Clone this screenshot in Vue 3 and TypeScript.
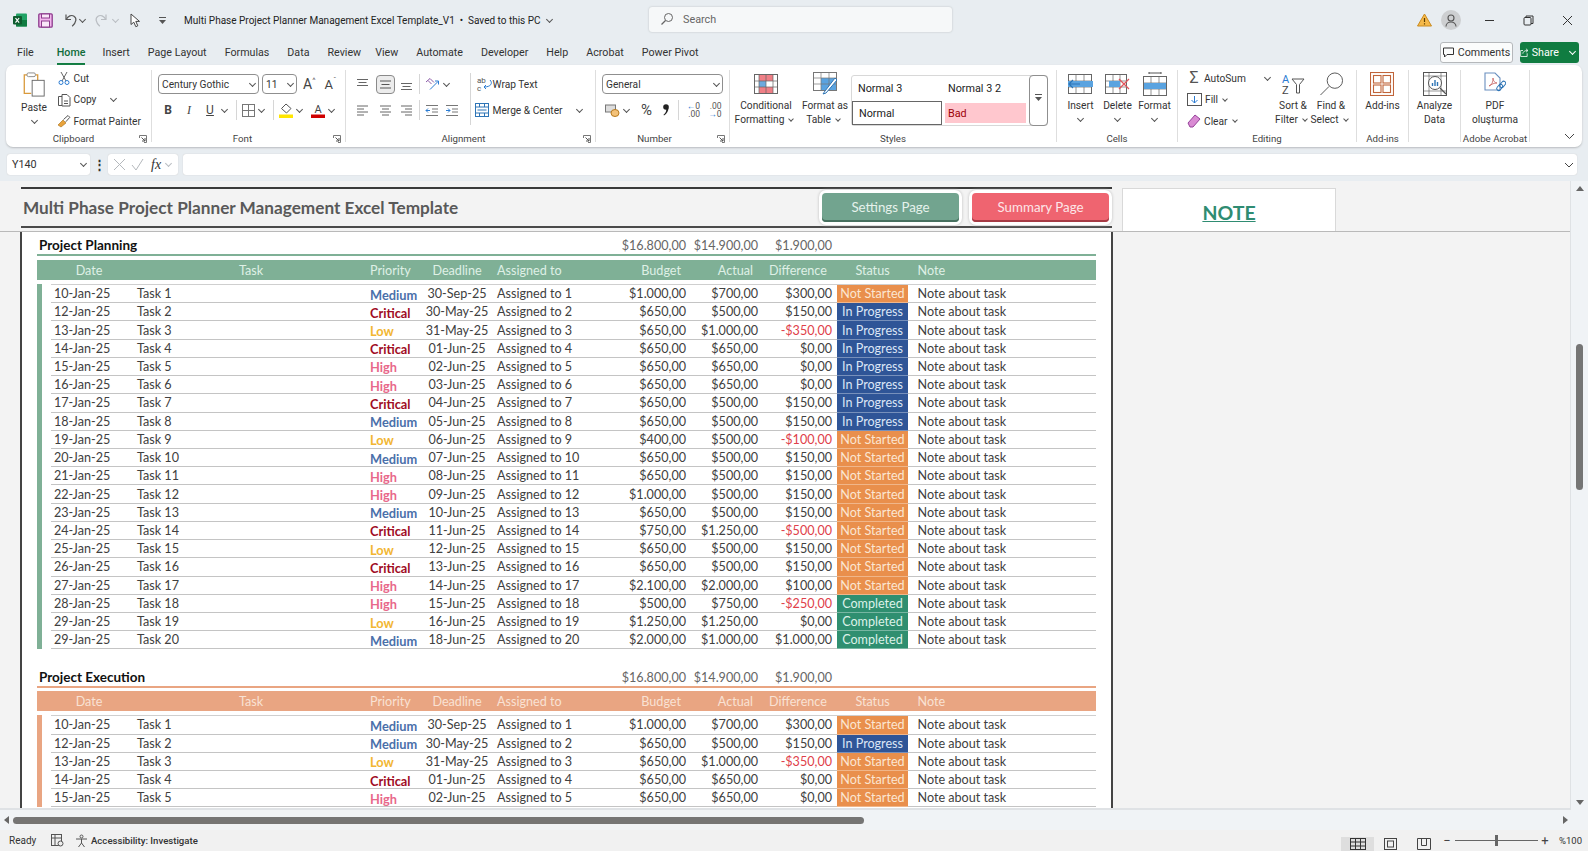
<script setup lang="ts">
type Row = { date: string; pr: string; dl: string; b: number; a: number; d: number; st: string }

const money = (n: number): string => {
  const abs = Math.abs(n).toString().replace(/\B(?=(\d{3})+$)/g, '.')
  return (n < 0 ? '-' : '') + '$' + abs + ',00'
}
const NS = 'Not Started'
const IP = 'In Progress'
const CO = 'Completed'
const mk = (date: string, pr: string, dl: string, b: number, a: number, d: number, st: string): Row => ({ date, pr, dl, b, a, d, st })

const planning: Row[] = [
  mk('10-Jan-25', 'Medium', '30-Sep-25', 1000, 700, 300, NS),
  mk('12-Jan-25', 'Critical', '30-May-25', 650, 500, 150, IP),
  mk('13-Jan-25', 'Low', '31-May-25', 650, 1000, -350, IP),
  mk('14-Jan-25', 'Critical', '01-Jun-25', 650, 650, 0, IP),
  mk('15-Jan-25', 'High', '02-Jun-25', 650, 650, 0, IP),
  mk('16-Jan-25', 'High', '03-Jun-25', 650, 650, 0, IP),
  mk('17-Jan-25', 'Critical', '04-Jun-25', 650, 500, 150, IP),
  mk('18-Jan-25', 'Medium', '05-Jun-25', 650, 500, 150, IP),
  mk('19-Jan-25', 'Low', '06-Jun-25', 400, 500, -100, NS),
  mk('20-Jan-25', 'Medium', '07-Jun-25', 650, 500, 150, NS),
  mk('21-Jan-25', 'High', '08-Jun-25', 650, 500, 150, NS),
  mk('22-Jan-25', 'High', '09-Jun-25', 1000, 500, 150, NS),
  mk('23-Jan-25', 'Medium', '10-Jun-25', 650, 500, 150, NS),
  mk('24-Jan-25', 'Critical', '11-Jun-25', 750, 1250, -500, NS),
  mk('25-Jan-25', 'Low', '12-Jun-25', 650, 500, 150, NS),
  mk('26-Jan-25', 'Critical', '13-Jun-25', 650, 500, 150, NS),
  mk('27-Jan-25', 'High', '14-Jun-25', 2100, 2000, 100, NS),
  mk('28-Jan-25', 'High', '15-Jun-25', 500, 750, -250, CO),
  mk('29-Jan-25', 'Low', '16-Jun-25', 1250, 1250, 0, CO),
  mk('29-Jan-25', 'Medium', '18-Jun-25', 2000, 1000, 1000, CO)
]
const execution: Row[] = [
  mk('10-Jan-25', 'Medium', '30-Sep-25', 1000, 700, 300, NS),
  mk('12-Jan-25', 'Medium', '30-May-25', 650, 500, 150, IP),
  mk('13-Jan-25', 'Low', '31-May-25', 650, 1000, -350, NS),
  mk('14-Jan-25', 'Critical', '01-Jun-25', 650, 650, 0, NS),
  mk('15-Jan-25', 'High', '02-Jun-25', 650, 650, 0, NS)
]
const sections = [
  { title: 'Project Planning', cls: 'green', rows: planning },
  { title: 'Project Execution', cls: 'orange', rows: execution }
]
const tabs = ['File', 'Home', 'Insert', 'Page Layout', 'Formulas', 'Data', 'Review', 'View', 'Automate', 'Developer', 'Help', 'Acrobat', 'Power Pivot']
</script>

<template>
  <div class="app">
    <header class="titlebar">
      <div class="qat">
        <svg class="i-xl" width="16" height="16" viewBox="0 0 16 16"><rect x="4" y="1.5" width="11" height="13" rx="1" fill="#21a366"/><rect x="4" y="8" width="11" height="6.5" fill="#107c41"/><rect x="1" y="4" width="9" height="8.5" rx="1" fill="#0e5c2f"/><path d="M3.5 6l3.6 4.6M7.1 6L3.5 10.6" stroke="#fff" stroke-width="1.2"/></svg>
        <svg class="i-save" width="15" height="15" viewBox="0 0 15 15"><rect x=".8" y=".8" width="13.4" height="13.4" rx="1" fill="#f3b6ee" stroke="#8c3a8c" stroke-width="1.3"/><rect x="3.5" y="1" width="8" height="4" fill="#f9e6f8" stroke="#8c3a8c"/><rect x="3.5" y="8" width="8" height="6" fill="#f9e6f8" stroke="#8c3a8c"/></svg>
        <svg class="i-undo" width="15" height="15" viewBox="0 0 15 15" fill="none" stroke="#555" stroke-width="1.2"><path d="M2 1.5v5h5"/><path d="M2.3 6.3C4 3 7.5 1.6 10 3.2c2.9 1.9 2.6 6-1.8 10"/></svg><i class="chev c1"></i>
        <svg class="i-redo" width="15" height="15" viewBox="0 0 15 15" fill="none" stroke="#b9bdc2" stroke-width="1.2"><path d="M13 1.5v5H8"/><path d="M12.7 6.3C11 3 7.5 1.6 5 3.2c-2.9 1.9-2.6 6 1.8 10"/></svg><i class="chev c2 light"></i>
        <svg class="i-cursor" width="13" height="15" viewBox="0 0 13 15" fill="#fff" stroke="#444"><path d="M2 1v10.5l2.8-2.3 2 4.500 2-.9-2-4.400h3.700z"/></svg>
        <svg class="i-qmenu" width="9" height="9" viewBox="0 0 9 9" fill="#555"><rect x="1" y="1" width="7" height="1"/><path d="M1 4h7L4.500 8z"/></svg>
        <span class="doc">Multi Phase Project Planner Management Excel Template_V1&nbsp; •&nbsp; Saved to this PC</span><i class="chev c3"></i>
      </div>
      <div class="search">
        <svg width="14" height="14" viewBox="0 0 14 14" fill="none" stroke="#666"><circle cx="8.5" cy="5.5" r="4"/><path d="M5.5 8.5L1.5 12.5" stroke-width="1.2"/></svg>
        <span>Search</span>
      </div>
      <div class="winbtns">
        <svg class="i-warn" width="15" height="14" viewBox="0 0 15 14"><path d="M7.5 1L14.5 13H.5z" fill="#f5b94a" stroke="#c98a1e"/><path d="M7.5 5v4M7.5 10.2v1.3" stroke="#5a3c00" stroke-width="1.2"/></svg>
        <div class="avatar"><svg width="12" height="13" viewBox="0 0 12 13" fill="none" stroke="#555" stroke-width="1.1"><circle cx="6" cy="4" r="3"/><path d="M1 12.5c0-6 10-6 10 0"/></svg></div>
        <svg class="w1" width="11" height="11" viewBox="0 0 11 11"><path d="M1 5.5h9" stroke="#333"/></svg>
        <svg class="w2" width="11" height="11" viewBox="0 0 11 11" fill="none" stroke="#333"><rect x="1" y="2.5" width="7" height="7.5" rx="1"/><path d="M3 2.5V1h7v7.5H8"/></svg>
        <svg class="w3" width="11" height="11" viewBox="0 0 11 11" stroke="#333"><path d="M1 1l9 9M10 1l-9 9"/></svg>
      </div>
    </header>

    <nav class="tabs">
      <span v-for="t in tabs" :key="t" class="tab" :class="{ active: t === 'Home', file: t === 'File', review: t === 'Review' }">{{ t }}</span>
      <div class="tabs-right">
        <span class="comments"><svg width="11" height="11" viewBox="0 0 11 11" fill="none" stroke="#333"><path d="M.5 1h10v6.5H4L1.5 10V7.5h-1z"/></svg>Comments</span>
        <span class="share"><svg width="11" height="11" viewBox="0 0 11 11" fill="none" stroke="#fff"><path d="M9 6.5v4H.8V3h3"/><path d="M3.5 7c.5-3 2.5-4 6-4M7.500 .8l2.500 2.200-2.500 2.200"/></svg>Share<i class="chev white"></i></span>
      </div>
    </nav>

    <section class="ribbon">
      <div class="group g-clip">
        <div class="body clip-body">
          <div class="paste">
            <svg width="26" height="25" viewBox="0 0 26 27" fill="none"><path d="M8 3H2.5v20H10" stroke="#d99a3c" stroke-width="1.4"/><path d="M12 3h5v6" stroke="#d99a3c" stroke-width="1.4"/><rect x="5.5" y="1" width="9" height="4" rx="1.5" fill="#fff" stroke="#888"/><rect x="11" y="9" width="13" height="17" fill="#fff" stroke="#666"/></svg>
            <span>Paste</span><i class="chev"></i>
          </div>
          <div class="clip-rows">
            <div class="cmd"><svg width="14" height="14" viewBox="0 0 13 14" fill="none"><path d="M3.5 1l5 9M9.5 1l-5 9" stroke="#666"/><circle cx="3.5" cy="11.5" r="2" stroke="#2b7cd3"/><circle cx="9.5" cy="11.5" r="2" stroke="#2b7cd3"/></svg><span>Cut</span></div>
            <div class="cmd"><svg width="14" height="14" viewBox="0 0 14 14" fill="none" stroke="#555"><path d="M5 3.5H1.5v9H5"/><path d="M5 1.5h5l3 3v8.5H5z"/><path d="M7 8h4M7 10.500h4"/></svg><span>Copy</span><i class="chev copy-c"></i></div>
            <div class="cmd"><svg width="14" height="14" viewBox="0 0 14 14"><path d="M1 11L6 6l3 3-5 4z" fill="#e8a33d" stroke="#a66d14" stroke-width=".6"/><path d="M6.5 5.5L11 1.5l1.800 1.800-4 4.500" fill="#fff" stroke="#555"/></svg><span>Format Painter</span></div>
          </div>
        </div>
        <div class="label l-clip">Clipboard<svg class="launch" viewBox="0 0 8 8" fill="none" stroke="#777"><path d="M.5 3V.5h7v7H5"/><path d="M2.5 2.5L6 6M3 6h3V3" stroke="#555"/></svg></div>
      </div>

      <div class="group g-font">
        <div class="body stack">
          <div class="line">
            <span class="sel s-font">Century Gothic<i class="chev"></i></span>
            <span class="sel s-size">11<i class="chev"></i></span>
            <span class="bigA a1">A<sup>^</sup></span>
            <span class="bigA a2">A<sup>ˇ</sup></span>
          </div>
          <div class="line font-tools">
            <b class="t-b">B</b><em class="t-i">I</em><u class="t-u">U</u><i class="chev"></i><i class="vsep"></i>
            <svg width="13" height="13" viewBox="0 0 13 13" fill="none" stroke="#777"><rect x=".5" y=".5" width="12" height="12"/><path d="M6.5 .5v12M.5 6.5h12"/></svg><i class="chev"></i><i class="vsep"></i>
            <svg width="14" height="15" viewBox="0 0 14 15"><path d="M7 1l5 4.500-4.500 4.500L2.500 5.500z" fill="#fff" stroke="#555"/><rect y="11.5" width="14" height="3.500" fill="#ffe600"/></svg><i class="chev"></i>
            <svg class="mleft" width="14" height="15" viewBox="0 0 14 15"><text x="7" y="10" font-size="11" text-anchor="middle" font-family="Roboto, sans-serif" fill="#444">A</text><rect y="11.5" width="14" height="3.500" fill="#d00000"/></svg><i class="chev"></i>
          </div>
        </div>
        <div class="label l-font">Font<svg class="launch" viewBox="0 0 8 8" fill="none" stroke="#777"><path d="M.5 3V.5h7v7H5"/><path d="M2.5 2.5L6 6M3 6h3V3" stroke="#555"/></svg></div>
      </div>

      <div class="group g-align">
        <div class="body stack">
          <div class="line al">
            <svg class="ic" viewBox="0 0 13 13" stroke="#666"><path d="M1 1.5h11M2.5 4.5h8M1 7.5h11"/></svg>
            <span class="activebox"><svg class="ic" viewBox="0 0 13 13" stroke="#555"><path d="M1 3h11M2.5 6.5h8M1 10h11"/></svg></span>
            <svg class="ic" viewBox="0 0 13 13" stroke="#666"><path d="M1 5.5h11M2.5 8.5h8M1 11.5h11"/></svg>
            <i class="vsep"></i>
            <svg class="ic wide" viewBox="0 0 15 14" fill="none"><path d="M1 5l4-3.5 4 4M3 3.5l3.5 3.5" stroke="#8c5ba8"/><path d="M5 12.5L13 4.5M10 4h3.500v3.500" stroke="#2b7cd3"/></svg><i class="chev"></i>
            <i class="vsep tall"></i>
            <svg class="wrap-i" width="17" height="17" viewBox="0 0 17 17" fill="none"><text x="1" y="7" font-size="8" font-family="Roboto, sans-serif" fill="#555">ab</text><text x="1" y="15" font-size="8" font-family="Roboto, sans-serif" fill="#555">c</text><path d="M14 4c3 3 1 7-6 7M10 9l-2 2 2 2" stroke="#2b7cd3"/></svg>
            <span class="wtxt">Wrap Text</span>
          </div>
          <div class="line al">
            <svg class="ic" viewBox="0 0 13 13" stroke="#666"><path d="M1 2h11M1 5h7M1 8h11M1 11h7"/></svg>
            <svg class="ic center-i" viewBox="0 0 13 13" stroke="#666"><path d="M1 2h11M3 5h7M1 8h11M3 11h7"/></svg>
            <svg class="ic" viewBox="0 0 13 13" stroke="#666"><path d="M1 2h11M5 5h7M1 8h11M5 11h7"/></svg>
            <i class="vsep"></i>
            <svg class="ic" viewBox="0 0 13 13" fill="none"><path d="M1 1.5h12M7 5h6M7 8h6M1 11.5h12" stroke="#777"/><path d="M5 6.5H1M3 4.5l-2 2 2 2" stroke="#2b7cd3"/></svg>
            <svg class="ic ind2" viewBox="0 0 13 13" fill="none"><path d="M1 1.5h12M7 5h6M7 8h6M1 11.5h12" stroke="#777"/><path d="M1 6.5h4M3 4.5l2 2-2 2" stroke="#2b7cd3"/></svg>
            <svg class="merge-i" width="14" height="14" viewBox="0 0 14 14" fill="none"><rect x=".5" y=".5" width="13" height="13" stroke="#2e75b6"/><path d="M.5 4h13M.5 10h13M4.5 .5v3.500M9.5 .5v3.500M4.5 10v3.500M9.5 10v3.500" stroke="#2e75b6"/><path d="M2.5 7h9" stroke="#2e75b6"/></svg>
            <span class="wtxt">Merge &amp; Center</span><i class="chev merge-c"></i>
          </div>
        </div>
        <div class="label l-align">Alignment<svg class="launch" viewBox="0 0 8 8" fill="none" stroke="#777"><path d="M.5 3V.5h7v7H5"/><path d="M2.5 2.5L6 6M3 6h3V3" stroke="#555"/></svg></div>
      </div>

      <div class="group g-num">
        <div class="body stack">
          <div class="line"><span class="sel s-gen">General<i class="chev"></i></span></div>
          <div class="line num-tools">
            <svg width="15" height="14" viewBox="0 0 15 14"><rect x=".5" y="2" width="10" height="7" fill="#ddd" stroke="#777"/><ellipse cx="10" cy="10" rx="4" ry="3.5" fill="#f3c27a" stroke="#b87a1c"/></svg><i class="chev"></i>
            <span class="pct">%</span>
            <svg class="comma" width="9" height="12" viewBox="0 0 9 12" fill="#222"><circle cx="4" cy="3" r="2.8"/><path d="M6.5 3.5C6.5 7 5 9.5 2 11.5L1.5 10.700C3.5 9 4.300 7.500 4.300 5z"/></svg>
            <i class="vsep"></i>
            <span class="dec"><em>←</em>0<br>.00</span>
            <span class="dec d2">.00<br><em>→</em>0</span>
          </div>
        </div>
        <div class="label l-num">Number<svg class="launch" viewBox="0 0 8 8" fill="none" stroke="#777"><path d="M.5 3V.5h7v7H5"/><path d="M2.5 2.5L6 6M3 6h3V3" stroke="#555"/></svg></div>
      </div>

      <div class="group g-styles">
        <div class="body styles-body">
          <div class="big cf">
            <svg width="24" height="20" viewBox="0 0 24 20"><rect x=".5" y=".5" width="23" height="19" fill="#fff" stroke="#666"/><rect x="5" y="1" width="14" height="6" fill="#ef7f86"/><rect x="5" y="7" width="7" height="6" fill="#6da9de"/><rect x="5" y="13" width="14" height="6" fill="#ef7f86"/><path d="M5 .5v19M19 .5v19M12 .5v19M.5 7h23M.5 13h23" stroke="#666" stroke-width=".7"/></svg>
            <span>Conditional<br>Formatting<i class="chev in"></i></span>
          </div>
          <div class="big ft">
            <svg width="24" height="24" viewBox="0 0 24 24"><rect x=".5" y=".5" width="23" height="18" fill="#fff" stroke="#777"/><rect x="8" y="6" width="15" height="12" fill="#5aa3e0"/><path d="M8 .5v18M16 .5v18M.5 6h23M.5 12h23" stroke="#777" stroke-width=".7"/><path d="M22 6L12 19l-2 3 3-1 11-13z" fill="#fff" stroke="#2e75b6"/></svg>
            <span>Format as<br>Table<i class="chev in"></i></span>
          </div>
          <div class="gallery">
            <div class="cells">
              <span class="sty">Normal 3</span><span class="sty">Normal 3 2</span>
              <span class="sty boxed">Normal</span><span class="sty bad">Bad</span>
            </div>
            <div class="more"><svg width="9" height="9" viewBox="0 0 9 9" fill="#555"><rect x="1" y="1" width="7" height="1"/><path d="M1 4h7L4.5 8z"/></svg></div>
          </div>
        </div>
        <div class="label">Styles</div>
      </div>

      <div class="group g-cells">
        <div class="body row-body">
          <div class="big cellb">
            <svg width="25" height="20" viewBox="0 0 25 20"><rect x=".5" y=".5" width="23" height="19" fill="#fff" stroke="#666"/><path d="M8 .5v19M16 .5v19M.5 7h23M.5 13h23" stroke="#666" stroke-width=".7"/><rect x="0" y="7" width="25" height="6" fill="#5aa3e0"/><path d="M12 10H1M5 6l-4 4 4 4" fill="none" stroke="#2e75b6" stroke-width="1.2"/></svg>
            <span>Insert</span><i class="chev"></i>
          </div>
          <div class="big cellb">
            <svg width="25" height="20" viewBox="0 0 25 20"><rect x=".5" y=".5" width="21" height="19" fill="#fff" stroke="#666"/><path d="M8 .5v19M15 .5v19M.5 7h21M.5 13h21" stroke="#666" stroke-width=".7"/><rect x="4" y="7" width="11" height="6" fill="#5aa3e0"/><path d="M14 5l10 10M24 5L14 15" stroke="#e0555c" stroke-width="1.3"/></svg>
            <span>Delete</span><i class="chev"></i>
          </div>
          <div class="big cellb fmt">
            <svg width="24" height="24" viewBox="0 0 24 24"><path d="M6 1h12M6 0v2M18 0v2" stroke="#555"/><rect x=".5" y="4.5" width="23" height="19" fill="#fff" stroke="#666"/><path d="M8 4.5v19M16 4.5v19M.5 11h23M.5 17h23" stroke="#666" stroke-width=".7"/><rect x="1" y="11" width="22" height="6" fill="#5aa3e0"/></svg>
            <span>Format</span><i class="chev"></i>
          </div>
        </div>
        <div class="label">Cells</div>
      </div>

      <div class="group g-edit">
        <div class="body row-body">
          <div class="clip-rows edit-rows">
            <div class="cmd"><span class="sigma">Σ</span><span>AutoSum</span><i class="chev auto-c"></i></div>
            <div class="cmd"><svg width="15" height="13" viewBox="0 0 15 13" fill="none"><rect x=".5" y=".5" width="14" height="12" stroke="#555"/><path d="M7.5 3v7M4.5 7l3 3 3-3" stroke="#2b7cd3"/></svg><span>Fill</span><i class="chev in"></i></div>
            <div class="cmd"><svg width="14" height="14" viewBox="0 0 14 14"><path d="M1 9l7-8 5 4-7 8H3z" fill="#d98bd3" stroke="#96419a"/></svg><span>Clear</span><i class="chev in"></i></div>
          </div>
          <div class="big sortb">
            <svg width="24" height="24" viewBox="0 0 24 24" fill="none"><text x="1" y="11" font-size="11" font-family="Roboto, sans-serif" fill="#2b7cd3">A</text><text x="1" y="22" font-size="11" font-family="Roboto, sans-serif" fill="#444">Z</text><path d="M11 7h12l-4.5 5.5V21h-3v-8.5z" stroke="#555"/></svg>
            <span>Sort &amp;<br>Filter<i class="chev in"></i></span>
          </div>
          <div class="big findb">
            <svg width="25" height="25" viewBox="0 0 25 25" fill="none" stroke="#555"><circle cx="16" cy="9" r="8"/><path d="M10 15L1 24"/></svg>
            <span>Find &amp;<br>Select<i class="chev in"></i></span>
          </div>
        </div>
        <div class="label">Editing</div>
      </div>

      <div class="group g-add">
        <div class="body center-body">
          <div class="big">
            <svg width="24" height="24" viewBox="0 0 24 24" fill="none" stroke="#c0643a" stroke-width="1.1"><rect x=".5" y=".5" width="23" height="23"/><rect x="3.5" y="3.5" width="7.5" height="7.5"/><rect x="13" y="3.5" width="7.5" height="7.5"/><rect x="3.5" y="13" width="7.5" height="7.5"/><rect x="13" y="13" width="7.5" height="7.5"/></svg>
            <span>Add-ins</span>
          </div>
        </div>
        <div class="label">Add-ins</div>
      </div>

      <div class="group g-an">
        <div class="body center-body">
          <div class="big">
            <svg width="24" height="24" viewBox="0 0 24 24" fill="none" stroke="#555"><rect x=".5" y=".5" width="23" height="23"/><path d="M.5 4h23M.5 19h23M6 .5v23M18 .5v23" stroke-width=".6"/><circle cx="12" cy="11" r="6.5" fill="#fff"/><path d="M9.5 14v-3M12 14V8M14.5 14v-4" stroke="#2e75b6" stroke-width="1.4"/><path d="M17 16l6 6" stroke-width="1.3"/></svg>
            <span>Analyze<br>Data</span>
          </div>
        </div>
      </div>

      <div class="group g-pdf">
        <div class="body center-body">
          <div class="big">
            <svg width="22" height="24" viewBox="0 0 22 24" fill="none"><path d="M1 1h10l5 5v12H1z" stroke="#6a8fbf" stroke-width="1.1"/><path d="M5 14c3-1 4-4 4-8 0 3 2 5 4 5-3 0-5 1-8 3z" stroke="#c0504d" stroke-width=".7"/><rect x="14" y="12" width="4" height="7" rx="2" transform="rotate(40 16 15)" stroke="#2e75b6"/><rect x="17" y="9" width="4" height="7" rx="2" transform="rotate(40 19 12)" stroke="#2e75b6"/></svg>
            <span>PDF<br>oluşturma</span>
          </div>
        </div>
        <div class="label">Adobe Acrobat</div>
      </div>
      <div class="collapse"><svg width="11" height="7" viewBox="0 0 11 7" fill="none" stroke="#444"><path d="M1 1l4.5 4.5L10 1"/></svg></div>
    </section>

    <div class="fbar">
      <div class="namebox"><span>Y140</span><i class="chev"></i></div>
      <span class="dots">⋮</span>
      <div class="fxbox">
        <svg width="13" height="13" viewBox="0 0 13 13" stroke="#b4b8bc"><path d="M1 1l11 11M12 1L1 12"/></svg>
        <svg width="13" height="13" viewBox="0 0 13 13" fill="none" stroke="#b4b8bc"><path d="M1 7l4 5 7-11"/></svg>
        <em>fx</em><i class="chev light"></i>
      </div>
      <div class="finput"><svg width="10" height="6" viewBox="0 0 10 6" fill="none" stroke="#444"><path d="M1 1l4 4 4-4"/></svg></div>
    </div>

    <main class="sheet">
      <div class="grid">
        <div class="topband">
          <div class="banner">
            <h1>Multi Phase Project Planner Management Excel Template</h1>
            <span class="pagebtn settings"><span>Settings Page</span></span>
            <span class="pagebtn summary"><span>Summary Page</span></span>
          </div>
          <div class="notebox">NOTE</div>
        </div>
        <div class="content">
          <div class="panel">
            <section v-for="s in sections" :key="s.title" class="sec" :class="s.cls">
              <div class="sec-title">
                <strong>{{ s.title }}</strong>
                <span>$16.800,00</span><span>$14.900,00</span><span>$1.900,00</span>
              </div>
              <div class="sec-line"></div>
              <div class="head">
                <span class="c">Date</span><span class="c task-h">Task</span><span class="lp">Priority</span><span class="c">Deadline</span><span class="lp">Assigned to</span>
                <span class="rb">Budget</span><span class="ra">Actual</span><span class="c diff-h">Difference</span><i></i><span class="c">Status</span><span class="ln">Note</span>
              </div>
              <div class="rowsWrap">
                <div class="bar"></div>
                <div class="rows">
                  <div v-for="(r, i) in s.rows" :key="i" class="row">
                    <span class="d">{{ r.date }}</span>
                    <span class="t">Task {{ i + 1 }}</span>
                    <span class="pr" :class="r.pr.toLowerCase()">{{ r.pr }}</span>
                    <span class="c">{{ r.dl }}</span>
                    <span class="lp">Assigned to {{ i + 1 }}</span>
                    <span class="m">{{ money(r.b) }}</span>
                    <span class="m">{{ money(r.a) }}</span>
                    <span class="m df" :class="{ neg: r.d < 0 }">{{ money(r.d) }}</span>
                    <i></i>
                    <span class="st" :class="r.st === NS ? 'ns' : r.st === IP ? 'ip' : 'co'">{{ r.st }}</span>
                    <span class="ln">Note about task</span>
                  </div>
                </div>
              </div>
            </section>
          </div>
        </div>
      </div>
      <div class="vscroll">
        <i class="tri up"></i>
        <div class="vthumb"></div>
        <i class="tri down"></i>
      </div>
    </main>

    <div class="hscroll">
      <i class="tri left"></i>
      <div class="hthumb"></div>
      <i class="tri right"></i>
    </div>

    <footer class="status">
      <span class="ready">Ready</span>
      <svg width="13" height="13" viewBox="0 0 13 13" fill="none" stroke="#555"><rect x=".5" y=".5" width="10" height="11"/><path d="M.5 4h10M4 .5v11"/><circle cx="9.5" cy="9.5" r="2.5" fill="#eee"/></svg>
      <span class="acc"><svg width="13" height="14" viewBox="0 0 13 14" fill="none" stroke="#555"><circle cx="6.5" cy="2.5" r="1.5"/><path d="M1 5h11M6.5 5v4M6.5 9l-3 4M6.5 9l3 4"/></svg>Accessibility: Investigate</span>
      <div class="views">
        <span class="view on"><svg width="16" height="12" viewBox="0 0 16 12" fill="none" stroke="#333"><rect x=".5" y=".5" width="15" height="11"/><path d="M5.5 .5v11M10.5 .5v11M.5 4h15M.5 8h15"/></svg></span>
        <span class="view"><svg width="13" height="12" viewBox="0 0 13 12" fill="none" stroke="#444"><rect x=".5" y=".5" width="12" height="11"/><rect x="3.5" y="3" width="6" height="6"/></svg></span>
        <span class="view"><svg width="14" height="12" viewBox="0 0 14 12" fill="none" stroke="#444"><path d="M.5 .5h13v11H.5zM4.5 .5v7h5v-7"/></svg></span>
      </div>
      <span class="zm minus">−</span>
      <div class="slider"><i></i></div>
      <span class="zm plus">+</span>
      <span class="pctz">%100</span>
    </footer>
  </div>
</template>

<style>
html, body { margin: 0; padding: 0; overflow: hidden; background: #e8edf1; }
</style>

<style scoped>
.app { width: 1588px; height: 851px; display: flex; flex-direction: column; background: #e8edf1; font-family: Roboto, "Noto Sans", sans-serif; font-size: 10.2px; color: #333; overflow: hidden; }
i { font-style: normal; display: inline-block; }
.chev { width: 4px; height: 4px; border-right: 1px solid #555; border-bottom: 1px solid #555; transform: rotate(45deg); margin: 0 4px 2px; flex: none; }
.chev.light { border-color: #b9bdc2; }
.chev.white { border-color: #fff; margin-left: 8px; }
.chev.in { margin-left: 5px; margin-bottom: 2px; width: 3px; height: 3px; }
.cmd .chev.in { margin-left: 2px; }
.titlebar { height: 40px; flex: none; display: grid; grid-template-columns: 649px 303px 1fr; align-items: center; }
.qat { display: flex; align-items: center; padding-left: 12px; }
.i-save { margin-left: 10px; }
.i-undo { margin-left: 11px; }
.c1 { margin-left: 1px; }
.i-redo { margin-left: 4px; }
.c2 { margin-left: 5px; }
.i-cursor { margin-left: 7px; }
.i-qmenu { margin-left: 16px; }
.doc { margin-left: 17px; font-size: 10px; color: #222; white-space: nowrap; }
.c3 { margin-left: 6px; }
.search { height: 25px; background: #f6f8f9; border-radius: 3px; box-shadow: 0 0 2px #b5b9bd; display: flex; align-items: center; padding-left: 11px; gap: 9px; color: #666; font-size: 10.8px; box-sizing: border-box; margin-top: -2px; }
.winbtns { display: flex; align-items: center; padding-left: 465px; }
.avatar { width: 20px; height: 20px; border-radius: 50%; background: #cdcfd1; display: flex; align-items: center; justify-content: center; margin-left: 9px; }
.w1 { margin-left: 23px; } .w2 { margin-left: 28px; } .w3 { margin-left: 28px; }
.tabs { height: 25px; flex: none; display: flex; align-items: center; padding-left: 17px; gap: 18px; position: relative; }
.tab { font-size: 10.7px; color: #333; line-height: 20px; white-space: nowrap; }
.tab.file { margin-right: 5px; }
.tab.active { color: #0f6b3a; font-weight: 500; box-shadow: 0 2px 0 #107c41; margin-right: -1px; }
.tab.review { margin-right: -4px; }
.tabs-right { margin-left: auto; display: flex; gap: 7px; padding-right: 9px; }
.comments { height: 19px; width: 71px; border: 1px solid #b5b8bb; background: #fbfcfc; border-radius: 3px; display: flex; align-items: center; justify-content: center; gap: 4px; font-size: 10.7px; }
.share { height: 21px; width: 59px; background: #107c41; color: #fff; border-radius: 3px; display: flex; align-items: center; justify-content: center; gap: 3px; font-size: 10.7px; }
.ribbon { height: 82px; flex: none; margin: 0 6px; background: #fff; border-radius: 7px; box-shadow: 0 1px 2px #b9bcbf; display: flex; padding-top: 5px; box-sizing: border-box; position: relative; }
.group { height: 72px; display: flex; flex-direction: column; box-sizing: border-box; border-right: 1px solid #dedede; flex: none; }
.body { flex: 1; min-height: 0; }
.label { height: 14px; margin-bottom: -4px; line-height: 14px; text-align: center; font-size: 9.7px; color: #444; position: relative; white-space: nowrap; }
.l-clip { padding-right: 10px; } .l-font { padding-right: 12px; } .l-align { padding-right: 14px; } .l-num { padding-right: 16px; }
.launch { position: absolute; right: 4px; top: 3px; width: 8px; height: 8px; }
.g-clip { width: 146px; }
.g-font { width: 194px; }
.g-align { width: 250px; }
.g-num { width: 134px; }
.g-styles { width: 327px; }
.g-cells { width: 121px; }
.g-edit { width: 179px; }
.g-add { width: 52px; }
.g-an { width: 52px; }
.g-pdf { width: 69px; }
.clip-body { display: flex; padding-left: 9.5px; }
.paste { width: 37px; display: flex; flex-direction: column; align-items: center; padding-top: 2px; }
.paste span { margin-top: 4px; line-height: 13px; }
.paste .chev { margin-top: 4px; }
.clip-rows { display: flex; flex-direction: column; gap: 3.5px; margin-top: -1px; padding-left: 4px; }
.cmd { height: 18px; display: flex; align-items: center; gap: 3px; white-space: nowrap; }
.copy-c { margin-left: 12px; }
.stack { display: flex; flex-direction: column; gap: 6px; padding-top: 4px; }
.line { height: 20px; display: flex; align-items: center; }
.sel { height: 20px; box-sizing: border-box; border: 1px solid #8f8f8f; border-radius: 4px; display: flex; align-items: center; justify-content: space-between; padding-left: 3px; background: #fff; font-size: 10.2px; }
.sel .chev { margin-right: 3px; }
.s-font { width: 101px; margin-left: 6px; }
.s-size { width: 35px; margin-left: 3px; }
.bigA { font-size: 14px; color: #444; }
.bigA sup { font-size: 8px; line-height: 0; color: #666; vertical-align: 6px; }
.a1 { margin-left: 6px; }
.a2 { margin-left: 9px; font-size: 13px; }
.font-tools { padding-left: 8px; }
.font-tools b, .font-tools em, .font-tools u { font-size: 12px; font-family: "Liberation Serif", serif; color: #444; width: 16px; text-align: center; }
.font-tools b { font-family: Roboto, sans-serif; }
.t-i { margin-left: 5px; } .t-u { margin-left: 5px; font-family: Roboto, sans-serif !important; }
.vsep { width: 1px; height: 20px; background: #d6d6d6; margin: 0 5px; flex: none; }
.mleft { margin-left: 5px; }
.al { padding-left: 10px; }
.ic { width: 13px; height: 13px; fill: none; flex: none; }
.ic.wide { width: 15px; height: 14px; }
.activebox { width: 19px; height: 19px; border: 1px solid #8a8a8a; border-radius: 4px; background: #ececec; display: flex; align-items: center; justify-content: center; margin: 0 5px 0 6.5px; box-sizing: border-box; flex: none; }
.center-i { margin: 0 8px 0 9.5px; }
.al .vsep { margin: 0 5px 0 6px; }
.al .vsep.tall { height: 52px; margin: 0 5px 0 17px; transform: translateY(15px); }
.ind2 { margin-left: 7px; }
.wrap-i { margin-right: 0; flex: none; }
.merge-i { margin: 0 4px 0 17px; flex: none; }
.wtxt { font-size: 10.2px; white-space: nowrap; }
.merge-c { margin-left: 14px; }
.s-gen { width: 121px; margin-left: 6px; }
.num-tools { padding-left: 9px; }
.pct { font-size: 15px; color: #444; margin-left: 8px; }
.comma { margin-left: 10px; flex: none; }
.num-tools .vsep { margin: 0 2px 0 7px; }
.dec { font-size: 8.5px; line-height: 8px; color: #555; width: 19px; text-align: right; }
.dec em { color: #2b7cd3; font-style: normal; }
.d2 { margin-left: 2.5px; }
.styles-body { display: flex; padding-left: 0; }
.big { display: flex; flex-direction: column; align-items: center; text-align: center; line-height: 13.5px; white-space: nowrap; padding-top: 2px; }
.big svg { height: 24px; flex: none; }
.big > span { margin-top: 3px; }
.cf { width: 72px; padding-left: 0; }
.ft { width: 46px; }
.gallery { width: 197px; height: 51px; margin: 5px 0 0 3px; display: flex; box-sizing: border-box; border: 1px solid #d8d8d8; border-radius: 3px; }
.cells { flex: 1; display: grid; grid-template-columns: 90px 87px; grid-template-rows: 25px 24px; }
.sty { display: flex; align-items: center; padding-left: 6px; font-size: 10.8px; color: #222; box-sizing: border-box; }
.boxed { border: 1px solid #666; }
.bad { background: #ffc7ce; color: #9c0006; margin: 2px 3px 2px 3px; padding-left: 3px; }
.more { width: 20px; margin: -1px -1px -1px 0; border: 1px solid #8f8f8f; border-radius: 4px; display: flex; align-items: center; justify-content: center; padding-bottom: 6px; box-sizing: content-box; }
.row-body { display: flex; }
.cellb { width: 37px; }
.g-cells .row-body { padding-left: 5px; }
.cellb .chev { margin-top: 3px; }
.edit-rows { width: 96px; box-sizing: border-box; padding-left: 9px; flex: none; }
.sigma { font-size: 16px; line-height: 16px; width: 14px; color: #555; text-align: center; }
.auto-c { margin-left: 16px; }
.sortb { width: 38px; }
.findb { width: 38px; }
.center-body { display: flex; justify-content: center; }
.collapse { position: absolute; right: 7px; bottom: 7px; line-height: 0; }
.fbar { height: 21px; flex: none; margin-top: 7px; display: flex; align-items: stretch; padding: 0 11px 0 7px; }
.namebox { width: 83px; background: #fff; border-radius: 3px; display: flex; align-items: center; justify-content: space-between; padding-left: 5px; box-sizing: border-box; box-shadow: 0 0 1px #bbb; font-size: 10.8px; }
.dots { width: 18px; text-align: center; line-height: 21px; font-size: 13px; font-weight: 700; }
.fxbox { width: 70px; background: #fff; border-radius: 3px; display: flex; align-items: center; gap: 5px; padding-left: 5px; box-sizing: border-box; box-shadow: 0 0 1px #bbb; }
.fxbox em { font-family: "Liberation Serif", serif; font-size: 14px; color: #333; margin-left: 2px; }
.fxbox .chev { margin: 0 0 2px; }
.finput { flex: 1; margin-left: 5px; background: #fff; border-radius: 3px; box-shadow: 0 0 1px #bbb; display: flex; align-items: center; justify-content: flex-end; padding-right: 3px; }
.sheet { flex: 1; min-height: 0; margin-top: 6px; display: flex; }
.grid { flex: 1; min-width: 0; display: flex; flex-direction: column; background: #f3f3f3; border-right: 1px solid #dfe2e5; border-bottom: 2px solid #dfe2e5; }
.topband { height: 51px; flex: none; display: flex; padding-left: 21px; border-bottom: 1px solid #b9b9b9; box-sizing: border-box; }
.banner { width: 1091px; height: 41px; margin-top: 6px; border-top: 2px solid #3a3a3a; border-bottom: 2px solid #4a4a4a; box-sizing: border-box; display: flex; align-items: center; }
.banner h1 { margin: 0 auto 0 2px; font-family: Lato, sans-serif; font-size: 17.2px; font-weight: 700; color: #595959; white-space: nowrap; }
.pagebtn { width: 143px; height: 35px; box-sizing: border-box; padding: 3px; background: #fff; border-radius: 7px; box-shadow: 0 0 3px #bbb; margin-left: 8px; display: flex; font-size: 13.3px; font-family: Lato, sans-serif; position: relative; z-index: 1; }
.pagebtn span { flex: 1; display: flex; align-items: center; justify-content: center; border-radius: 4px; padding-bottom: 1px; }
.settings span { background: #72a48f; box-shadow: inset 0 -2px 0 #47705f; color: #e6f2ec; }
.summary span { background: #ef6470; box-shadow: inset 0 -2px 0 #a63a44; color: #fde6e8; }
.summary { margin-left: 7px; }
.notebox { width: 214px; margin: 7px 0 0 10px; background: #fff; border: 1px solid #d9d9d9; border-bottom: none; box-sizing: border-box; height: 43px; display: flex; align-items: center; justify-content: center; color: #2f8c72; font-family: Lato, sans-serif; font-size: 19.5px; font-weight: 700; text-decoration: underline; padding-top: 5px; }
.content { flex: 1; min-height: 0; overflow: hidden; padding-left: 20px; }
.panel { width: 1093px; height: 100%; background: #fff; border-left: 2px solid #444; border-right: 2px solid #444; box-sizing: border-box; padding: 4px 0 0 15px; font-family: Lato, sans-serif; font-size: 12.6px; color: #404040; }
.sec { width: 1059px; }
.sec + .sec { margin-top: 19px; }
.sec-title { height: 18px; display: grid; grid-template-columns: 577px 72px 72px 74px; align-items: center; color: #666; }
.sec-title strong { font-size: 13.5px; color: #111; font-weight: 700; padding-left: 2px; white-space: nowrap; }
.sec-title span { text-align: right; }
.sec-line { height: 2px; background: #7fb096; }
.orange .sec-line { background: #e9a582; }
.head { height: 20px; margin-top: 4px; display: grid; grid-template-columns: 104px 226px 53px 74px 120px 74px 72px 73px 4px 71px 1fr; align-items: center; background: #7fb096; color: #dff0e6; }
.orange .head { background: #e9a582; color: #f9e2d4; margin-top: 3px; }
.c { text-align: center; }
.task-h { padding-right: 6px; }
.diff-h { padding-left: 3px; white-space: nowrap; }
.lp { padding-left: 3px; white-space: nowrap; }
.rb { text-align: right; padding-right: 7px; }
.ra { text-align: right; padding-right: 7px; }
.ln { padding-left: 9.5px; white-space: nowrap; }
.rowsWrap { display: flex; margin-top: 4px; }
.bar { width: 5px; margin-right: 9px; background: #7fb096; flex: none; }
.orange .bar { background: #e9a582; }
.rows { flex: 1; border-top: 1px solid #cfcfcf; }
.row { height: 18.23px; box-sizing: border-box; border-bottom: 1px solid #c4c4c4; display: grid; grid-template-columns: 83px 233px 53px 74px 120px 74px 72px 73px 4px 71px 1fr; align-items: center; white-space: nowrap; }
.d { padding-left: 3px; }
.t { padding-left: 3px; }
.pr { padding: 2px 0 0 3px; font-weight: 700; font-size: 12.8px; line-height: 14px; }
.medium { color: #4a70aa; } .critical { color: #a00c24; } .low { color: #f2b632; } .high { color: #e8688a; }
.m { text-align: right; padding-right: 2px; }
.df { padding-right: 1px; }
.neg { color: #e0404a; }
.st { align-self: stretch; display: flex; align-items: center; justify-content: center; margin-bottom: -1px; border-bottom: 1px solid rgba(255, 255, 255, .35); }
.ns { background: #e98f4c; color: #fbe6d2; }
.ip { background: #2f5597; color: #dbe6f6; }
.co { background: #2f8f70; color: #dcf2e9; }
.vscroll { width: 17px; flex: none; background: #f0f3f6; display: flex; flex-direction: column; align-items: center; padding-top: 5px; box-sizing: border-box; position: relative; }
.vthumb { width: 7px; height: 146px; border-radius: 4px; background: #757575; margin-top: 153px; }
.tri { width: 0; height: 0; flex: none; }
.tri.up { border-left: 4px solid transparent; border-right: 4px solid transparent; border-bottom: 5px solid #666; }
.tri.down { border-left: 4px solid transparent; border-right: 4px solid transparent; border-top: 5px solid #666; margin-top: auto; margin-bottom: 5px; }
.hscroll { height: 20px; flex: none; display: flex; align-items: center; padding: 0 20px 0 4px; background: #f0f3f6; box-sizing: border-box; }
.tri.left { border-top: 4px solid transparent; border-bottom: 4px solid transparent; border-right: 5px solid #666; }
.tri.right { border-top: 4px solid transparent; border-bottom: 4px solid transparent; border-left: 5px solid #666; margin-left: auto; }
.hthumb { width: 851px; height: 7px; border-radius: 4px; background: #757575; margin-left: 4px; }
.status { height: 21px; flex: none; display: flex; align-items: center; background: #f1f1f1; padding-left: 9px; font-size: 10px; color: #333; }
.ready { width: 42px; }
.acc { display: flex; align-items: center; gap: 3px; margin-left: 11px; font-weight: 500; font-size: 9.6px; }
.views { margin-left: auto; display: flex; align-self: flex-end; height: 14px; }
.view { width: 33px; display: flex; align-items: center; justify-content: center; }
.view.on { background: #dedede; }
.zm { font-size: 13px; color: #444; width: 8px; text-align: center; }
.minus { margin-left: 3px; }
.plus { margin-left: 3px; }
.slider { width: 83px; height: 1px; background: #666; margin-left: 4px; position: relative; }
.slider i { position: absolute; left: 40px; top: -5px; width: 3px; height: 11px; background: #666; }
.pctz { margin: 0 6px 0 10px; font-size: 9.5px; width: 23px; white-space: nowrap; }
</style>
